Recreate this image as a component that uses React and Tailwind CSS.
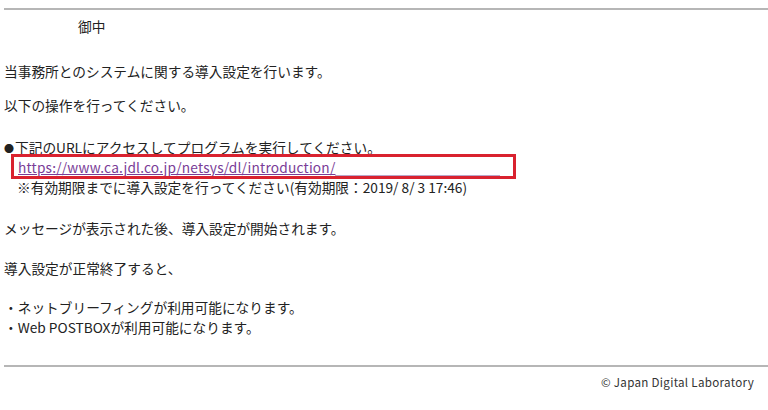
import React from 'react';

const font = { fontFamily: '"Noto Sans CJK JP", "Noto Sans", sans-serif' };

export default function App() {
  return (
    <div className="w-[768px] h-[410px] bg-white text-[#222] text-[13.7px] leading-[20px] overflow-hidden" style={font}>
      <div className="pt-[8px] pl-[4px]">
        <div className="h-[2px] bg-[#b6b6b6]" />
      </div>

      <div className="px-[4px]">
        <p className="mt-[6px] pl-[74px]">御中</p>

        <p className="mt-[25px]">当事務所とのシステムに関する導入設定を行います。</p>

        <p className="mt-[14px]">以下の操作を行ってください。</p>

        <div className="mt-[22px]">
          <p className="h-[20px]">
            <span className="text-[10px] leading-none pr-[1px]">●</span>下記のURLにアクセスしてプログラムを実行してください。
          </p>
          <div className="relative pl-[14px] h-[20px]">
            <span className="text-[#7a3d97] underline decoration-[#7a3d97] tracking-[0.2px]">
              https://www.ca.jdl.co.jp/netsys/dl/introduction/
            </span>
            <span className="inline-block w-[165px] border-b border-[#b9a6c9] align-[-3px] h-[14px]" />
            <div className="absolute left-[7px] top-[-3px] w-[505px] h-[25px] border-[3px] border-[#d9222f]" />
          </div>
          <p className="pl-[13px]">※有効期限までに導入設定を行ってください(有効期限：2019/ 8/ 3 17:46)</p>
        </div>

        <p className="mt-[21px]">メッセージが表示された後、導入設定が開始されます。</p>

        <p className="mt-[20px]">導入設定が正常終了すると、</p>

        <div className="mt-[19px]">
          <p>・ネットブリーフィングが利用可能になります。</p>
          <p>・Web POSTBOXが利用可能になります。</p>
        </div>
      </div>

      <div className="mt-[28px] pl-[4px]">
        <div className="h-[2px] bg-[#b6b6b6]" />
      </div>

      <div className="flex justify-end pr-[14px] mt-[7px] text-[11.6px] leading-[16px] text-[#333] tracking-[0.3px]">
        © Japan Digital Laboratory
      </div>
    </div>
  );
}
